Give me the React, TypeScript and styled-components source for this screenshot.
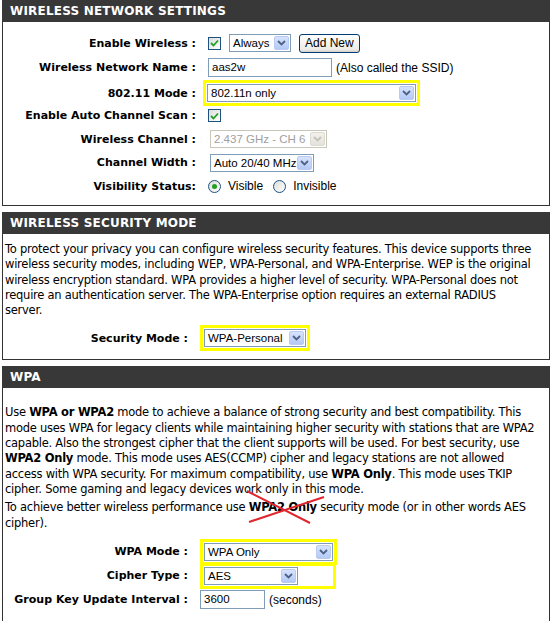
import React from 'react';
import styled, { createGlobalStyle } from 'styled-components';

const GlobalStyle = createGlobalStyle`
    html, body {
        margin: 0;
        padding: 0;
        background: #ffffff;
    }
    body {
        font-family: "Liberation Sans", Arial, sans-serif;
        font-size: 12px;
        color: #000000;
    }
`;

const Page = styled.div`
    width: 548px;
    padding: 0 1px 0 2px;
`;

const Section = styled.section`
    margin-bottom: 6px;
`;

const SectionHead = styled.div`
    height: 22px;
    line-height: 23px;
    padding-left: 8px;
    background: #383838;
    color: #ffffff;
    font-family: "DejaVu Sans", Verdana, sans-serif;
    font-weight: bold;
    font-size: 12px;
    letter-spacing: 0.2px;
`;

const SectionBody = styled.div<{ $pad: string }>`
    border: 1px solid #333333;
    border-top: none;
    padding: ${(p) => p.$pad};
`;

const Paragraph = styled.p<{ $gap?: number }>`
    margin: 0 0 ${(p) => p.$gap ?? 0}px 0;
    line-height: 15.3px;
    white-space: nowrap;
    font-family: "DejaVu Sans", Tahoma, sans-serif;
    font-size: 11.5px;
    letter-spacing: -0.25px;
`;

const FormRow = styled.div<{ $label: number; $h?: number }>`
    display: grid;
    grid-template-columns: ${(p) => p.$label}px 1fr;
    column-gap: 12px;
    align-items: center;
    height: ${(p) => p.$h ?? 24}px;
`;

const Label = styled.div`
    text-align: right;
    white-space: nowrap;
    font-family: "DejaVu Sans", Verdana, sans-serif;
    font-weight: bold;
    font-size: 11px;
`;

const Controls = styled.div`
    display: flex;
    align-items: center;
    gap: 8px;
    white-space: nowrap;
`;

const Highlight = styled.div<{ $width?: number; $shift: number }>`
    display: flex;
    align-items: center;
    border: 3px solid #ffff00;
    padding: 1px 1px;
    margin-left: -${(p) => p.$shift}px;
    width: ${(p) => (p.$width ? `${p.$width}px` : 'auto')};
    box-sizing: border-box;
`;

const SelectBox = styled.div<{ $width: number; $disabled?: boolean; $indent?: number }>`
    display: flex;
    align-items: center;
    justify-content: space-between;
    width: ${(p) => p.$width}px;
    height: 18px;
    margin-left: ${(p) => p.$indent ?? 0}px;
    box-sizing: border-box;
    border: 1px solid ${(p) => (p.$disabled ? '#c9c7ba' : '#7f9db9')};
    background: #ffffff;
    padding: 0 1px 0 3px;
    font-size: 11.5px;
    color: ${(p) => (p.$disabled ? '#a0a0a0' : '#000000')};
`;

const ArrowBox = styled.span<{ $disabled?: boolean }>`
    display: flex;
    align-items: center;
    justify-content: center;
    width: 15px;
    height: 14px;
    border-radius: 2px;
    background: ${(p) =>
        p.$disabled
            ? 'linear-gradient(#f2f1ea, #e3e2db)'
            : 'linear-gradient(#d6e3fd, #b4c9f5)'};
    border: 1px solid ${(p) => (p.$disabled ? '#dcdbd3' : '#b9cbf2')};
    box-sizing: border-box;
`;

const TextBox = styled.div<{ $width: number }>`
    width: ${(p) => p.$width}px;
    height: 19px;
    box-sizing: border-box;
    border: 1px solid #7f9db9;
    padding: 0 3px;
    line-height: 17px;
    font-size: 11.5px;
`;

const CheckBox = styled.span`
    display: inline-flex;
    align-items: center;
    justify-content: center;
    width: 13px;
    height: 13px;
    box-sizing: border-box;
    border: 1px solid #1c5180;
    background: linear-gradient(135deg, #dcdcd7, #ffffff);
`;

const RadioDot = styled.span<{ $on?: boolean }>`
    display: inline-flex;
    align-items: center;
    justify-content: center;
    width: 13px;
    height: 13px;
    box-sizing: border-box;
    border-radius: 50%;
    border: 1px solid #1c5180;
    background: linear-gradient(135deg, #dcdcd7, #ffffff);
    &::after {
        content: '';
        display: ${(p) => (p.$on ? 'block' : 'none')};
        width: 5px;
        height: 5px;
        border-radius: 50%;
        background: #21a121;
    }
`;

const Radio = styled.label`
    display: inline-flex;
    align-items: center;
    gap: 7px;
    font-size: 12px;
    margin-right: 2px;
`;

const XpButton = styled.button`
    height: 19px;
    padding: 0 5px;
    border: 1px solid #003c74;
    border-radius: 3px;
    background: linear-gradient(#ffffff, #ecebe6 85%, #d6d0c5);
    font-family: "Liberation Sans", Arial, sans-serif;
    font-size: 12px;
    color: #000000;
`;

const Note = styled.span`
    font-size: 12px;
    margin-left: -4px;
`;

const Crossed = styled.b`
    position: relative;
`;

const CrossMark = styled.svg`
    position: absolute;
    left: -3px;
    top: -9px;
    overflow: visible;
    pointer-events: none;
`;

function Arrow({ disabled }: { disabled?: boolean }) {
    return (
        <ArrowBox $disabled={disabled}>
            <svg width="9" height="6" viewBox="0 0 9 6">
                <path
                    d="M1 1 L4.5 4.5 L8 1"
                    fill="none"
                    stroke={disabled ? '#c4c3bb' : '#4d6185'}
                    strokeWidth="1.8"
                />
            </svg>
        </ArrowBox>
    );
}

function Select({
    value,
    width,
    disabled,
    indent,
}: {
    value: string;
    width: number;
    disabled?: boolean;
    indent?: number;
}) {
    return (
        <SelectBox $width={width} $disabled={disabled} $indent={indent} role="combobox">
            <span>{value}</span>
            <Arrow disabled={disabled} />
        </SelectBox>
    );
}

function Check() {
    return (
        <CheckBox>
            <svg width="9" height="8" viewBox="0 0 9 8">
                <path d="M1 4 L3.5 6.5 L8 1.5" fill="none" stroke="#21a121" strokeWidth="1.8" />
            </svg>
        </CheckBox>
    );
}

function App() {
    return (
        <Page>
            <GlobalStyle />
            <Section>
                <SectionHead>WIRELESS NETWORK SETTINGS</SectionHead>
                <SectionBody $pad="9px 0 7px 0">
                    <FormRow $label={193}>
                        <Label>Enable Wireless :</Label>
                        <Controls>
                            <Check />
                            <Select value="Always" width={62} />
                            <XpButton>Add New</XpButton>
                        </Controls>
                    </FormRow>
                    <FormRow $label={193} $h={25}>
                        <Label>Wireless Network Name :</Label>
                        <Controls>
                            <TextBox $width={124}>aas2w</TextBox>
                            <Note>(Also called the SSID)</Note>
                        </Controls>
                    </FormRow>
                    <FormRow $label={193}>
                        <Label>802.11 Mode :</Label>
                        <Controls>
                            <Highlight $shift={5}>
                                <Select value="802.11n only" width={209} />
                            </Highlight>
                        </Controls>
                    </FormRow>
                    <FormRow $label={193} $h={23}>
                        <Label>Enable Auto Channel Scan :</Label>
                        <Controls>
                            <Check />
                        </Controls>
                    </FormRow>
                    <FormRow $label={193}>
                        <Label>Wireless Channel :</Label>
                        <Controls>
                            <Select value="2.437 GHz - CH 6" width={117} indent={2} disabled />
                        </Controls>
                    </FormRow>
                    <FormRow $label={193} $h={23}>
                        <Label>Channel Width :</Label>
                        <Controls>
                            <Select value="Auto 20/40 MHz" width={104} indent={2} />
                        </Controls>
                    </FormRow>
                    <FormRow $label={193}>
                        <Label>Visibility Status:</Label>
                        <Controls>
                            <Radio>
                                <RadioDot $on />
                                Visible
                            </Radio>
                            <Radio>
                                <RadioDot />
                                Invisible
                            </Radio>
                        </Controls>
                    </FormRow>
                </SectionBody>
            </Section>

            <Section>
                <SectionHead>WIRELESS SECURITY MODE</SectionHead>
                <SectionBody $pad="8px 2px 9px 2px">
                    <Paragraph $gap={7}>
                        To protect your privacy you can configure wireless security features. This device supports three
                        <br />
                        wireless security modes, including WEP, WPA-Personal, and WPA-Enterprise. WEP is the original
                        <br />
                        wireless encryption standard. WPA provides a higher level of security. WPA-Personal does not
                        <br />
                        require an authentication server. The WPA-Enterprise option requires an external RADIUS
                        <br />
                        server.
                    </Paragraph>
                    <FormRow $label={183} $h={25}>
                        <Label>Security Mode :</Label>
                        <Controls>
                            <Highlight $shift={0}>
                                <Select value="WPA-Personal" width={102} />
                            </Highlight>
                        </Controls>
                    </FormRow>
                </SectionBody>
            </Section>

            <Section>
                <SectionHead>WPA</SectionHead>
                <SectionBody $pad="17px 2px 20px 2px">
                    <Paragraph $gap={3}>
                        Use <b>WPA or WPA2</b> mode to achieve a balance of strong security and best compatibility. This
                        <br />
                        mode uses WPA for legacy clients while maintaining higher security with stations that are WPA2
                        <br />
                        capable. Also the strongest cipher that the client supports will be used. For best security, use
                        <br />
                        <b>WPA2 Only</b> mode. This mode uses AES(CCMP) cipher and legacy stations are not allowed
                        <br />
                        access with WPA security. For maximum compatibility, use <b>WPA Only</b>. This mode uses TKIP
                        <br />
                        cipher. Some gaming and legacy devices work only in this mode.
                    </Paragraph>
                    <Paragraph $gap={8}>
                        To achieve better wireless performance use{' '}
                        <Crossed>
                            WPA2 Only
                            <CrossMark width="80" height="34" viewBox="0 0 80 34">
                                <line x1="1" y1="0" x2="64" y2="32" stroke="#e0262c" strokeWidth="2" />
                                <line x1="3" y1="31" x2="78" y2="6" stroke="#e0262c" strokeWidth="2" />
                            </CrossMark>
                        </Crossed>{' '}
                        security mode (or in other words AES
                        <br />
                        cipher).
                    </Paragraph>
                    <FormRow $label={183}>
                        <Label>WPA Mode :</Label>
                        <Controls>
                            <Highlight $shift={0} $width={137}>
                                <Select value="WPA Only" width={129} />
                            </Highlight>
                        </Controls>
                    </FormRow>
                    <FormRow $label={183}>
                        <Label>Cipher Type :</Label>
                        <Controls>
                            <Highlight $shift={0} $width={136}>
                                <Select value="AES" width={94} />
                            </Highlight>
                        </Controls>
                    </FormRow>
                    <FormRow $label={183} $h={26}>
                        <Label>Group Key Update Interval :</Label>
                        <Controls>
                            <TextBox $width={65}>3600</TextBox>
                            <Note>(seconds)</Note>
                        </Controls>
                    </FormRow>
                </SectionBody>
            </Section>
        </Page>
    );
}

export default App;
